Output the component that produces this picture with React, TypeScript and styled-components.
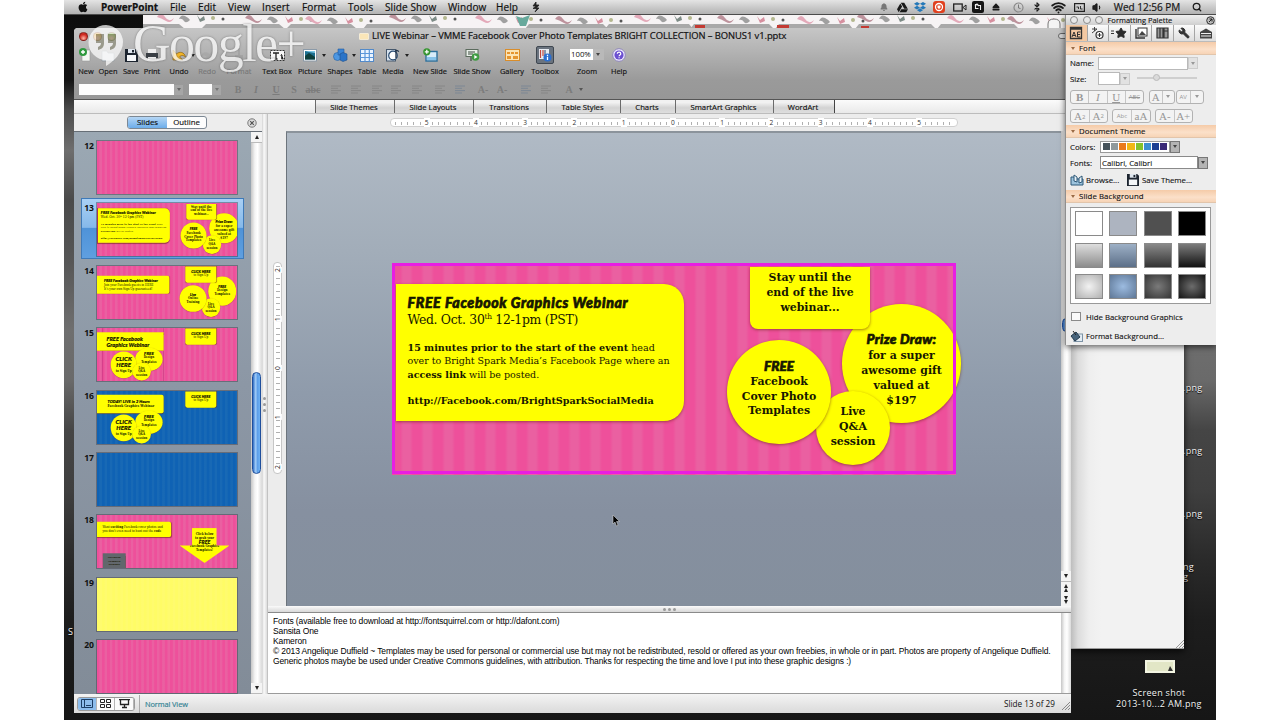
import React from 'react';
import styled, { createGlobalStyle, css } from 'styled-components';
import { Bluetooth, Wifi, Volume1, Search, Wrench, Star } from 'lucide-react';
import { FaApple, FaBell, FaDropbox, FaGoogleDrive, FaEject } from 'react-icons/fa';

const ui = `"Open Sans", "Noto Sans", sans-serif`;
const slab = `"DejaVu Serif", serif`;
const display = `Lato, "Open Sans", sans-serif`;

const Global = createGlobalStyle`
  *, *::before, *::after { box-sizing: border-box; }
  body { margin: 0; background: #fff; font-family: ${ui}; color: #111; overflow: hidden; }
  svg { display: block; flex: none; overflow: visible; }
`;

/* ---------- Desktop and menu bar ---------- */

const Desktop = styled.main`
  position: relative;
  width: 1152px;
  height: 720px;
  margin: 0 64px;
  overflow: hidden;
  background: linear-gradient(#0c0c0c 0, #141414 80px, #4c4c4c 110px, #6e6e6e 150px, #4a4a4a 200px, #565656 260px, #6f6f6f 330px, #6a6a6a 380px, #454545 430px, #3f3f3f 490px, #2a2a2a 560px, #1d1d1d 620px, #161616 720px);
`;

const MenuBar = styled.nav`
  position: relative;
  display: flex;
  align-items: center;
  height: 15px;
  padding-left: 13px;
  background: linear-gradient(#e4e4e4, #b2b2b2);
  border-bottom: 1px solid #4b4b4b;
  font-size: 10px;
  line-height: 14px;
  white-space: nowrap;
  -webkit-text-stroke: 0.2px #111;
`;

const MenuItem = styled.span<{ $w: number; $bold?: boolean; $ls?: number }>`
  flex: none;
  width: ${(p) => p.$w}px;
  font-weight: ${(p) => (p.$bold ? 700 : 400)};
  letter-spacing: ${(p) => p.$ls ?? 0.1}px;
`;

const TrayItem = styled.span<{ $w: number; $color?: string }>`
  flex: none;
  display: flex;
  justify-content: center;
  align-items: center;
  width: ${(p) => p.$w}px;
  color: ${(p) => p.$color ?? '#1a1a1a'};
`;

const Spacer = styled.span`
  flex: 1;
`;

/* ---------- Windows behind the document ---------- */

const BrowserWindow = styled.section`
  position: absolute;
  left: 79px;
  top: 15px;
  width: 928px;
  height: 14px;
  overflow: hidden;
  background: #f6f3f4;
`;

const FinderWindow = styled.section`
  position: absolute;
  left: 1007px;
  top: 300px;
  width: 113px;
  height: 349px;
  display: flex;
  align-items: flex-end;
  justify-content: flex-end;
  background: linear-gradient(90deg, #bdbdbd 0, #dcdcdc 7px, #eeeeee 18px, #f2f2f2 30px);
  border-bottom: 1px solid #9a9a9a;
  box-shadow: 0 2px 7px rgba(0, 0, 0, 0.8);
`;

const DesktopLabel = styled.span<{ $x: number; $y: number }>`
  position: absolute;
  left: ${(p) => p.$x}px;
  top: ${(p) => p.$y}px;
  color: #f4f4f4;
  font-size: 9px;
  line-height: 11px;
  letter-spacing: 0.3px;
  text-align: center;
  white-space: nowrap;
  text-shadow: 0 1px 1px #000;
`;

const FileIcon = styled.span`
  position: absolute;
  left: 1081px;
  top: 660px;
  display: flex;
  align-items: flex-end;
  justify-content: flex-end;
  width: 30px;
  height: 13px;
  background: #e2e6c6;
  border: 2px solid #f3f5e2;
  color: #333;
`;

const Pointer = styled.svg`
  position: absolute;
  left: 548px;
  top: 515px;
`;

/* ---------- PowerPoint window ---------- */

const AppWindow = styled.section`
  position: absolute;
  left: 10px;
  top: 28px;
  width: 997px;
  height: 685px;
  display: flex;
  flex-direction: column;
  background: #ececec;
  border-radius: 4px 4px 0 0;
  overflow: hidden;
`;

const Chrome = styled.header`
  height: 72px;
  background: linear-gradient(#c6c6c6, #b4b4b4 22px, #9a9a9a 52px, #979797);
  border-bottom: 1px solid #555;
`;

const TitleBar = styled.div`
  position: relative;
  display: flex;
  align-items: center;
  height: 16px;
  padding: 0 3px 0 5px;
`;

const WindowDot = styled.span<{ $c: string }>`
  width: 9px;
  height: 9px;
  margin-right: 5px;
  border-radius: 50%;
  border: 1px solid rgba(60, 10, 10, 0.5);
  background: radial-gradient(circle at 50% 75%, #ffb3a4, ${(p) => p.$c} 60%);
`;

const Title = styled.h1`
  display: flex;
  align-items: center;
  gap: 3px;
  margin: 0 0 0 238px;
  font-size: 9.4px;
  font-weight: 400;
  line-height: 14px;
  white-space: nowrap;
  letter-spacing: -0.06px;
  -webkit-text-stroke: 0.2px #111;
`;

const TitleIcon = styled.i`
  width: 10px;
  height: 7px;
  border-radius: 1px;
  background: #fae6b8;
  border: 1px solid #f5ecd6;
`;

const TitlePill = styled.i`
  flex: none;
  width: 14px;
  height: 6px;
  margin: 0 -4px 0 auto;
  border: 1px solid #666;
  border-radius: 4px;
  background: #d6d6d6;
`;

const Toolbar = styled.div`
  display: flex;
  height: 36px;
`;

const Tool = styled.div<{ $w: number; $ml?: number; $faded?: boolean }>`
  flex: none;
  display: flex;
  flex-direction: column;
  align-items: center;
  width: ${(p) => p.$w}px;
  margin-left: ${(p) => p.$ml ?? 0}px;
  padding-top: 2px;
  opacity: ${(p) => (p.$faded ? 0.3 : 1)};
`;

const ToolIcon = styled.span<{ $active?: boolean }>`
  flex: none;
  display: flex;
  align-items: center;
  justify-content: center;
  gap: 3px;
  width: 18px;
  height: 18px;
  border-radius: 2px;
  ${(p) =>
    p.$active &&
    css`
      background: #6a737e;
      border: 1px solid #3f4750;
    `}
`;

const ToolLabel = styled.span`
  margin-top: 2px;
  font-size: 7.4px;
  line-height: 10px;
  white-space: nowrap;
  -webkit-text-stroke: 0.15px #111;
`;

const Caret = styled.i<{ $c?: string }>`
  flex: none;
  border: 2px solid transparent;
  border-top: 3px solid ${(p) => p.$c ?? '#222'};
  border-bottom: 0;
`;

const ToolCaret = styled(Caret)`
  position: absolute;
  margin-left: 27px;
`;

const ZoomField = styled.span`
  display: flex;
  align-items: center;
  width: 34px;
  height: 11px;
  margin: 3px 0 4px;
  background: linear-gradient(90deg, #fff 23px, #b9b9b9 23px);
  font-size: 7.8px;
  line-height: 11px;
  padding-left: 1px;
  gap: 5px;
`;

const FormatBar = styled.div`
  display: flex;
  align-items: center;
  height: 19px;
  padding-left: 5px;
  color: #7c7c7c;
  font: 700 10px "Liberation Serif", serif;
`;

const Combo = styled.span<{ $w: number }>`
  flex: none;
  width: ${(p) => p.$w}px;
  height: 11px;
  background: #fdfdfd;
`;

const ComboArrow = styled.span<{ $w: number }>`
  flex: none;
  display: flex;
  align-items: center;
  justify-content: center;
  width: ${(p) => p.$w}px;
  height: 10px;
  background: #a6a6a6;
`;

const FormatCell = styled.span<{ $w: number; $italic?: boolean; $deco?: string }>`
  flex: none;
  display: flex;
  justify-content: center;
  width: ${(p) => p.$w}px;
  font-style: ${(p) => (p.$italic ? 'italic' : 'normal')};
  text-decoration: ${(p) => p.$deco ?? 'none'};
`;

const GalleryTabs = styled.div`
  display: flex;
  flex: none;
  height: 14px;
  padding-left: 241px;
  background: linear-gradient(#fbfbfb, #e9e9e9);
  border-bottom: 1px solid #bcbcbc;
`;

const GalleryTab = styled.span<{ $w: number }>`
  display: flex;
  justify-content: center;
  width: ${(p) => p.$w}px;
  padding-right: 2px;
  border-left: 1px solid #6b6b6b;
  background: linear-gradient(#f1f1f1 20%, #d2d2d2 60%, #dedede);
  font-size: 7.7px;
  line-height: 14px;
  white-space: nowrap;
  -webkit-text-stroke: 0.15px #111;
  &:last-child {
    border-right: 1px solid #444;
  }
`;

const Body = styled.div`
  display: flex;
  height: 580px;
`;

/* ---------- Slide list ---------- */

const SidePanel = styled.aside`
  display: flex;
  flex-direction: column;
  width: 188px;
`;

const PanelTabs = styled.div`
  display: flex;
  align-items: center;
  height: 17px;
  padding: 0 5px 0 53px;
  background: #ededed;
`;

const Segment = styled.div`
  display: flex;
  width: 80px;
  height: 13px;
  border: 1px solid #7c8894;
  border-radius: 3px;
  overflow: hidden;
  background: #fdfdfd;
  font-size: 7.8px;
  line-height: 11px;
  text-align: center;
`;

const SegmentItem = styled.span<{ $on?: boolean }>`
  flex: 1;
  background: ${(p) => (p.$on ? 'linear-gradient(#b5d6f5, #6cadea)' : 'none')};
  -webkit-text-stroke: 0.15px #111;
`;

const ListArea = styled.div`
  display: flex;
  flex: 1;
  min-height: 0;
  border-top: 1px solid #666e76;
`;

const SlideList = styled.ol`
  width: 177px;
  height: 562px;
  margin: 0;
  padding: 4px 7px 0;
  list-style: none;
  overflow: hidden;
  background: linear-gradient(#9ba8b3, #8c97a5 45%, #828c98);
`;

const SlideRow = styled.li<{ $on?: boolean }>`
  display: flex;
  align-items: flex-start;
  width: 163px;
  height: 61px;
  margin-bottom: 1.4px;
  padding: 4px 0 0;
  border: 1px solid ${(p) => (p.$on ? '#3f7ab8' : 'transparent')};
  background: ${(p) => (p.$on ? 'linear-gradient(#a9d0f5 0, #86b9ea 48%, #4f93d8 50%, #5f9fe0 100%)' : 'none')};
`;

const SlideNumber = styled.span`
  width: 12px;
  margin-right: 3px;
  font-size: 8.6px;
  font-weight: 700;
  line-height: 11px;
  text-align: right;
`;

const Thumb = styled.span`
  display: block;
  width: 140px;
  height: 53px;
  overflow: hidden;
  outline: 1px solid rgba(60, 60, 70, 0.45);
`;

const ThumbScale = styled.span`
  display: block;
  width: 564px;
  height: 212px;
  transform: scale(0.2495, 0.252);
  transform-origin: 0 0;
`;

const ScrollTrack = styled.div<{ $w: number }>`
  display: flex;
  flex-direction: column;
  align-items: center;
  width: ${(p) => p.$w}px;
  background: linear-gradient(90deg, #c6c6c6, #f4f4f4 35%, #fff 60%, #dadada);
`;

const ScrollThumb = styled.i<{ $top: number; $h: number }>`
  flex: none;
  width: 9px;
  height: ${(p) => p.$h}px;
  margin-top: ${(p) => p.$top}px;
  border: 1px solid #1f4f9c;
  border-radius: 5px;
  background: linear-gradient(90deg, #2f6cc4, #a8d2fa 40%, #5c9de8 60%, #6db2f4);
`;

const ScrollArrow = styled.span<{ $up?: boolean; $push?: boolean; $double?: boolean }>`
  display: flex;
  flex-direction: column;
  align-items: center;
  justify-content: center;
  width: 100%;
  height: ${(p) => (p.$double ? 12 : 11)}px;
  margin-top: ${(p) => (p.$push ? 'auto' : 0)};
  background: #f4f4f4;
  border-bottom: 1px solid ${(p) => (p.$double ? 'transparent' : '#bbb')};
  &::after,
  &::before {
    content: '';
    border: 2.5px solid transparent;
    ${(p) => (p.$up ? 'border-bottom: 4px solid #222; border-top: 0;' : 'border-top: 4px solid #222; border-bottom: 0;')}
  }
  &::before {
    display: ${(p) => (p.$double ? 'block' : 'none')};
  }
`;

const Divider = styled.div`
  display: flex;
  flex-direction: column;
  align-items: center;
  justify-content: center;
  gap: 3px;
  width: 6px;
  background: linear-gradient(90deg, #d2d2d2, #fafafa 40%, #dcdcdc);
  border-right: 1px solid #c2c2c2;
`;

const Grip = styled.i`
  width: 3px;
  height: 3px;
  border-radius: 50%;
  background: #9a9a9a;
`;

/* ---------- Editing area ---------- */

const Editor = styled.div`
  display: flex;
  flex-direction: column;
  width: 803px;
`;

const RulerRow = styled.div`
  flex: none;
  height: 17px;
  padding: 4px 0 0 122px;
  background: #ececec;
`;

const ticks = (dir: string) =>
  `repeating-linear-gradient(${dir}, #b0b0b0 0 1px, transparent 1px 6.16px)`;

const HRuler = styled.div`
  display: flex;
  width: 568px;
  height: 9px;
  padding-left: 11px;
  border-radius: 4px;
  border: 1px solid #d0d0d0;
  background: ${ticks('90deg')} 4px 3px / 558px 3px no-repeat, #fff;
`;

const HRulerMark = styled.span`
  width: 49.25px;
  font-size: 6.6px;
  line-height: 8px;
  text-align: center;
  color: #333;
  span { background: #fff; padding: 0 1px; }
`;

const WorkRow = styled.div`
  display: flex;
  flex: none;
  height: 475px;
`;

const VRulerColumn = styled.div`
  width: 18px;
  padding: 131px 0 0 5px;
  background: #ececec;
`;

const VRuler = styled.div`
  display: flex;
  flex-direction: column;
  width: 9px;
  height: 212px;
  border-radius: 4px;
  border: 1px solid #c6c6c6;
  background: ${ticks('180deg')} 2px 3px / 4px 206px no-repeat, #fff;
`;

const VRulerMark = styled.span`
  flex: none;
  display: flex;
  align-items: flex-end;
  justify-content: center;
  height: 49.3px;
  font-size: 6.6px;
  line-height: 8px;
  &:first-child { height: 30.5px; }
  span { margin-bottom: 20px; padding: 0 1px; background: #fff; transform: rotate(-90deg); }
`;

const Workspace = styled.div`
  width: 775px;
  border: 1px solid #6c747c;
  border-width: 2px 0 0 1px;
  border-top-color: #8b939b;
  padding: 130px 0 0 105px;
  background: linear-gradient(#b0bac5, #a2adb9 25%, #8f9bab 55%, #8690a0 80%, #848f9d);
`;

const SlideFrame = styled.div`
  position: relative;
  width: 564px;
  height: 211px;
  &::after {
    content: '';
    position: absolute;
    inset: 0;
    border: 3px solid #e81ee2;
  }
`;

const Splitter = styled.div`
  flex: none;
  display: flex;
  align-items: center;
  justify-content: center;
  gap: 2px;
  height: 7px;
  background: linear-gradient(#fafafa, #d8d8d8);
  border-bottom: 1px solid #8a8a8a;
`;

const NotesRow = styled.div`
  display: flex;
  flex: 1;
  min-height: 0;
  border-bottom: 1px solid #9b9b9b;
`;

const Notes = styled.div`
  width: 793px;
  padding: 3px 0 0 5px;
  background: #fff;
  font: 8.5px/10px "Liberation Sans", Arial, sans-serif;
  letter-spacing: -0.13px;
  white-space: nowrap;
  color: #000;
  p { margin: 0; }
`;

const StatusBar = styled.footer`
  display: flex;
  align-items: center;
  flex: 1;
  padding: 0 0 0 3px;
  background: linear-gradient(#f4f4f4, #dadada);
  font-size: 7.4px;
`;

const ViewButtons = styled.div`
  display: flex;
  width: 58px;
  height: 14px;
  border: 1px solid #9a9a9a;
  border-radius: 3px;
  overflow: hidden;
  background: #fafafa;
`;

const ViewButton = styled.span<{ $on?: boolean }>`
  flex: 1;
  display: flex;
  align-items: center;
  justify-content: center;
  background: ${(p) => (p.$on ? '#8dbdec' : 'none')};
  border-right: 1px solid #b5b5b5;
`;

const ViewName = styled.span`
  margin-left: 4px;
  padding-left: 5px;
  border-left: 1px solid #aaa;
  line-height: 18px;
  letter-spacing: -0.1px;
  color: #2f7f92;
  -webkit-text-stroke: 0.15px #2f7f92;
`;

const SlideCount = styled.span`
  margin-left: auto;
  margin-right: 2px;
  font-size: 8.2px;
`;

/* ---------- Slide artwork ---------- */

const stripes: Record<string, [string, string]> = {
  pink: ['#ee509b', '#ea60a1'],
  blue: ['#0f62b4', '#1869b5'],
  yellow: ['#fffc66', '#fffb6e'],
};

const Canvas = styled.span<{ $tone: string }>`
  position: relative;
  display: block;
  width: 564px;
  height: 212px;
  background: repeating-linear-gradient(
    90deg,
    ${(p) => stripes[p.$tone][0]} 0 8px,
    ${(p) => stripes[p.$tone][1]} 11px 18px,
    ${(p) => stripes[p.$tone][0]} 21px
  );
`;

const Shape = styled.span<{ $x: number; $y: number; $w: number; $h: number; $r?: string; $s?: number; $lh?: number; $left?: number; $bg?: string; $pt?: number }>`
  position: absolute;
  left: ${(p) => p.$x}px;
  top: ${(p) => p.$y}px;
  width: ${(p) => p.$w}px;
  height: ${(p) => p.$h}px;
  display: flex;
  flex-direction: column;
  justify-content: ${(p) => (p.$pt === undefined ? 'center' : 'flex-start')};
  padding-top: ${(p) => p.$pt ?? 0}px;
  align-items: ${(p) => (p.$left === undefined ? 'center' : 'flex-start')};
  padding-left: ${(p) => p.$left ?? 0}px;
  border-radius: ${(p) => p.$r ?? '50%'};
  background: ${(p) => p.$bg ?? '#ffff00'};
  box-shadow: 0 1px 3px rgba(110, 40, 20, 0.6);
  color: #171700;
  font-family: ${slab};
  font-weight: 700;
  font-size: ${(p) => p.$s ?? 10.9}px;
  line-height: ${(p) => p.$lh ?? 14.8}px;
  white-space: nowrap;
`;

const Heading = styled.span<{ $s?: number; $ls?: number }>`
  font-family: ${display};
  font-style: italic;
  font-weight: 900;
  font-size: ${(p) => p.$s ?? 13.6}px;
  letter-spacing: ${(p) => p.$ls ?? 0.3}px;
  -webkit-text-stroke: 0.7px #171700;
`;

const Line = styled.span<{ $s?: number; $mt?: number; $light?: boolean; $ls?: number }>`
  font-size: ${(p) => (p.$s ? `${p.$s}px` : 'inherit')};
  margin-top: ${(p) => p.$mt ?? 0}px;
  font-weight: ${(p) => (p.$light ? 400 : 700)};
  letter-spacing: ${(p) => p.$ls ?? 0}px;
  sup { font-size: 0.6em; line-height: 0; }
`;

const Arrow = styled(Shape)`
  clip-path: polygon(25% 0, 74% 0, 74% 50%, 100% 50%, 50% 100%, 0 50%, 25% 50%);
`;

const WebinarSlide = () => (
  <Canvas $tone="pink">
    <Shape $x={450} $y={41} $w={119} $h={119} $lh={14.9} $pt={28}>
      <Heading>Prize Draw:</Heading>
      <Line $mt={2}>for a super</Line>
      <Line>awesome gift</Line>
      <Line>valued at</Line>
      <Line>$197</Line>
    </Shape>
    <Shape $x={4} $y={21} $w={288} $h={137} $r="0 20px 20px 0" $left={11.5} $lh={13.4} $pt={12}>
      <Heading $s={14.2} $ls={0.62}>FREE Facebook Graphics Webinar</Heading>
      <Line $s={12.4} $mt={4} $light $ls={-0.3}>
        Wed. Oct. 30<sup>th</sup> 12-1pm (PST)
      </Line>
      <Line $s={9.55} $mt={14} $light><b>15 minutes prior to the start of the event</b> head</Line>
      <Line $s={9.5} $light $ls={-0.02}>over to Bright Spark Media’s Facebook Page where an</Line>
      <Line $s={9.5} $light><b>access link</b> will be posted.</Line>
      <Line $s={9.65} $mt={13}>http://Facebook.com/BrightSparkSocialMedia</Line>
    </Shape>
    <Shape $x={358} $y={4} $w={120} $h={62} $r="0 0 8px 8px" $pt={4}>
      <Line>Stay until the</Line>
      <Line>end of the live</Line>
      <Line>webinar...</Line>
    </Shape>
    <Shape $x={424} $y={128} $w={74} $h={74} $pt={14}>
      <Line>Live</Line>
      <Line>Q&amp;A</Line>
      <Line>session</Line>
    </Shape>
    <Shape $x={335} $y={77} $w={104} $h={104} $pt={19}>
      <Heading $ls={0}>FREE</Heading>
      <Line $mt={1}>Facebook</Line>
      <Line>Cover Photo</Line>
      <Line>Templates</Line>
    </Shape>
  </Canvas>
);

const SignUpBox = () => (
  <Shape $x={354} $y={2} $w={124} $h={64} $r="0 0 8px 8px" $pt={12}>
    <Heading $s={14}>CLICK HERE</Heading>
    <Line $light>to Sign Up</Line>
  </Shape>
);

const InviteSlide = () => (
  <Canvas $tone="pink">
    <Shape $x={0} $y={39} $w={290} $h={71} $r="0 8px 8px 0" $left={28} $lh={17}>
      <Heading $s={14.5}>FREE Facebook Graphics Webinar</Heading>
      <Line $s={11} $light>Join your Facebook guests in HERE</Line>
      <Line $s={11} $light>It’s your own Sign Up guaranteed!</Line>
    </Shape>
    <Shape $x={446} $y={42} $w={112} $h={116} $pt={32}>
      <Heading>FREE</Heading>
      <Line>Design</Line>
      <Line>Templates</Line>
    </Shape>
    <SignUpBox />
    <Shape $x={420} $y={128} $w={74} $h={74}>
      <Line>Live</Line>
      <Line>Q&amp;A</Line>
      <Line>session</Line>
    </Shape>
    <Shape $x={331} $y={76} $w={108} $h={106}>
      <Heading>Live</Heading>
      <Line>Online</Line>
      <Line>Training</Line>
    </Shape>
  </Canvas>
);

const PromoSlide = ({ tone, children }: { tone: string; children: React.ReactNode }) => (
  <Canvas $tone={tone}>
    {children}
    <Shape $x={153} $y={78} $w={110} $h={92} $lh={17} $pt={14}>
      <Heading $s={17}>FREE</Heading>
      <Line>Design</Line>
      <Line>Templates</Line>
    </Shape>
    <Shape $x={55} $y={93} $w={104} $h={106} $lh={24}>
      <Heading $s={24}>CLICK</Heading>
      <Heading $s={24}>HERE</Heading>
      <Line>to Sign Up</Line>
    </Shape>
    <Shape $x={142} $y={138} $w={74} $h={70}>
      <Line>Live</Line>
      <Line>Q&amp;A</Line>
      <Line>session</Line>
    </Shape>
    <SignUpBox />
  </Canvas>
);

const slides: { n: number; on?: boolean; art: React.ReactNode }[] = [
  { n: 12, art: <Canvas $tone="pink" /> },
  { n: 13, on: true, art: <WebinarSlide /> },
  { n: 14, art: <InviteSlide /> },
  {
    n: 15,
    art: (
      <PromoSlide tone="pink">
        <Shape $x={20} $y={0} $w={2} $h={212} $r="0" $bg="#e2389f" />
        <Shape $x={266} $y={0} $w={2} $h={212} $r="0" $bg="#e2389f" />
        <Shape $x={0} $y={17} $w={267} $h={73} $r="0" $left={38} $lh={25}>
          <Heading $s={22}>FREE Facebook</Heading>
          <Heading $s={22}>Graphics Webinar</Heading>
        </Shape>
      </PromoSlide>
    ),
  },
  {
    n: 16,
    art: (
      <PromoSlide tone="blue">
        <Shape $x={0} $y={15} $w={267} $h={73} $r="0 8px 8px 0" $left={42} $lh={18}>
          <Heading $s={16}>TODAY! LIVE in 2 Hours</Heading>
          <Line $s={12}>Facebook Graphics Webinar</Line>
        </Shape>
      </PromoSlide>
    ),
  },
  { n: 17, art: <Canvas $tone="blue" /> },
  {
    n: 18,
    art: (
      <Canvas $tone="pink">
        <Shape $x={0} $y={27} $w={297} $h={60} $r="0 8px 8px 0" $left={22} $s={11.2} $lh={16}>
          <Line $light>Want <b>exciting</b> Facebook cover photos and</Line>
          <Line $light>you don’t even need to hunt out the <b>code</b></Line>
        </Shape>
        <Shape $x={23} $y={152} $w={92} $h={60} $r="0" $bg="#62676c" $s={10} $lh={14}>
          <Line>Facebook</Line>
          <Line>Graphics</Line>
          <Line>Webinar</Line>
        </Shape>
        <Arrow $x={331} $y={52} $w={200} $h={138} $r="0" $s={11} $lh={16} $pt={16}>
          <Line>Click below</Line>
          <Line>to grab your</Line>
          <Heading $s={20}>FREE</Heading>
          <Line>Facebook Graphics</Line>
          <Line>Templates!</Line>
        </Arrow>
      </Canvas>
    ),
  },
  { n: 19, art: <Canvas $tone="yellow" /> },
  { n: 20, art: <Canvas $tone="pink" /> },
];

/* ---------- Formatting palette ---------- */

const Palette = styled.section`
  position: absolute;
  left: 1001px;
  top: 15px;
  width: 151px;
  height: 330px;
  display: flex;
  flex-direction: column;
  background: #ededed;
  border-left: 1px solid #8f8f8f;
  box-shadow: 0 2px 6px rgba(0, 0, 0, 0.6);
  font-size: 7.8px;
  white-space: nowrap;
  -webkit-text-stroke: 0.12px #111;
`;

const PaletteTitle = styled.div`
  display: flex;
  align-items: center;
  height: 10px;
  padding: 0 1px 0 4px;
  gap: 4.5px;
  background: linear-gradient(#f0f0f0, #cfcfcf);
  font-size: 7.5px;
  line-height: 10px;
`;

const Ring = styled.i`
  width: 8px;
  height: 8px;
  border: 1px solid #8a8a8a;
  border-radius: 50%;
  background: #e8e8e8;
`;

const PaletteTabs = styled.div`
  display: flex;
  height: 17px;
  border-bottom: 1px solid #bbb;
`;

const PaletteTab = styled.span<{ $on?: boolean }>`
  flex: 1;
  display: flex;
  align-items: center;
  justify-content: center;
  border-right: 1px solid #a5a5a5;
  background: ${(p) => (p.$on ? '#f3c8a2' : 'linear-gradient(#fbfbfb, #dedede)')};
  &:last-child { border-right: 0; }
`;

const SectionHead = styled.h2`
  display: flex;
  align-items: center;
  flex: none;
  gap: 4px;
  height: 13px;
  margin: 0;
  padding-left: 5px;
  background: linear-gradient(#f5cba8, #fbe0c9 60%, #f7d4b6);
  border-bottom: 1px solid #e2c5ab;
  font-size: 7.8px;
  font-weight: 400;
  letter-spacing: 0.1px;
`;

const SectionBody = styled.div<{ $h: number; $pt?: number }>`
  flex: none;
  height: ${(p) => p.$h}px;
  padding: ${(p) => p.$pt ?? 0}px 0 0 4px;
`;

const Row = styled.div<{ $h: number }>`
  display: flex;
  align-items: center;
  height: ${(p) => p.$h}px;
`;

const RowLabel = styled.span<{ $w: number }>`
  width: ${(p) => p.$w}px;
`;

const Field = styled.span<{ $w: number; $dark?: boolean }>`
  width: ${(p) => p.$w}px;
  height: 13px;
  padding-left: 1px;
  line-height: 12px;
  border: 1px solid ${(p) => (p.$dark ? '#8a8a8a' : '#b9b9b9')};
  background: #fff;
`;

const DropButton = styled.span<{ $dark?: boolean }>`
  display: flex;
  align-items: center;
  justify-content: center;
  width: 10px;
  height: 12px;
  border: 1px solid ${(p) => (p.$dark ? '#777' : '#ccc')};
  background: ${(p) => (p.$dark ? '#b4b4b4' : '#e2e2e2')};
`;

const Slider = styled.span`
  display: flex;
  width: 60px;
  height: 2px;
  margin: 0 0 2px 7px;
  padding-left: 16px;
  align-items: center;
  background: #cfcfcf;
  i { width: 7px; height: 7px; border-radius: 50%; background: #dadada; border: 1px solid #bbb; flex: none; }
`;

const ButtonGroup = styled.span<{ $w: number; $mr?: number }>`
  display: flex;
  width: ${(p) => p.$w}px;
  height: 14px;
  margin-right: ${(p) => p.$mr ?? 0}px;
  border: 1px solid #b2b2b2;
  border-radius: 3px;
  background: #f3f3f3;
  color: #979797;
  font: 11px/12px "Liberation Serif", serif;
  -webkit-text-stroke: 0;
  span { flex: 1; display: flex; justify-content: center; align-items: center; border-right: 1px solid #c6c6c6; }
  span:last-child { border-right: 0; }
  small { font: 6px/12px ${ui}; }
`;

const Colors = styled.span`
  display: flex;
  gap: 1px;
  width: 70px;
  height: 12px;
  padding: 1.5px 2px;
  border: 1px solid #999;
  background: #fff;
`;

const Chip = styled.i<{ $c: string }>`
  flex: 1;
  background: ${(p) => p.$c};
`;

const SwatchGrid = styled.div`
  display: grid;
  grid-template-columns: repeat(4, 28px);
  grid-auto-rows: 25px;
  gap: 6.7px 6.3px;
  width: 141px;
  height: 97px;
  padding: 3px 0 0 4px;
  border: 1px solid #999;
  background: #fff;
`;

const Swatch = styled.i<{ $bg: string }>`
  border: 1px solid #8a8a8a;
  background: ${(p) => p.$bg};
`;

const Check = styled.i`
  width: 10px;
  height: 9px;
  margin: 0 5px 0 1px;
  border: 1px solid #8a8a8a;
  background: #fafafa;
`;

const LinkText = styled.span<{ $w?: number; $ml?: number }>`
  width: ${(p) => (p.$w ? `${p.$w}px` : 'auto')};
  margin-left: ${(p) => p.$ml ?? 2}px;
`;

const swatches = [
  '#fff', '#adb4c0', '#505050', '#000',
  'linear-gradient(#dedede, #8c8c8c)', 'linear-gradient(#9db0c6, #5c6f88)', 'linear-gradient(#8a8a8a, #333)', 'linear-gradient(#7c7c7c, #111)',
  'radial-gradient(#f2f2f2, #b0b0b0)', 'radial-gradient(#9cbbe0, #5e7796)', 'radial-gradient(#7a7a7a, #363636)', 'radial-gradient(#6c6c6c, #141414)',
];

const themeColors = ['#46525a', '#8f999c', '#ea7a1c', '#f1b815', '#84c22c', '#3c8fd2', '#1b3f93', '#3b2a78'];

/* ---------- Watermark ---------- */

const Watermark = styled.div`
  position: absolute;
  left: 24px;
  top: 22px;
  display: flex;
  align-items: flex-start;
  opacity: 0.72;
`;

const WatermarkText = styled.span`
  margin: -3px 0 0 9px;
  color: #fff;
  font: 52px/50px "Liberation Serif", serif;
  letter-spacing: -1.6px;
  text-shadow: 0 0 2px rgba(70, 70, 70, 0.9);
`;

/* ---------- Drawn icons ---------- */

const DiskIcon = ({ s = 13 }: { s?: number }) => (
  <svg width={s} height={s} viewBox="0 0 13 13">
    <path d="M0 0h11l2 2v11H0z" fill="#1d2530" />
    <rect x="3" y="0" width="7" height="4" fill="#dfe6ee" />
    <rect x="2" y="6" width="9" height="6" fill="#f4f6f8" />
    <rect x="7" y="1" width="2" height="2.4" fill="#1d2530" />
  </svg>
);

const toolIcons: Record<string, React.ReactNode> = {
  New: (
    <svg width="14" height="14" viewBox="0 0 14 14">
      <path d="M3 2h8v11H3z" fill="#f4f7f4" stroke="#999" strokeWidth=".6" />
      <circle cx="4" cy="4" r="4" fill="#2f9a3f" />
      <path d="M4 2v4M2 4h4" stroke="#fff" strokeWidth="1.4" />
    </svg>
  ),
  Open: (
    <svg width="14" height="14" viewBox="0 0 14 14">
      <path d="M1 3h5l1 2h6v8H1z" fill="#d8dde2" stroke="#8c949c" strokeWidth=".6" />
    </svg>
  ),
  Save: <DiskIcon />,
  Print: (
    <svg width="14" height="14" viewBox="0 0 14 14">
      <path d="M3 1h8v5H3z" fill="#eee" />
      <rect x="1" y="5" width="12" height="5" fill="#3a3f45" />
      <rect x="3" y="9" width="8" height="3" fill="#f0f0f0" />
    </svg>
  ),
  Undo: (
    <svg width="16" height="14" viewBox="0 0 16 14">
      <path d="M2 2v10h10l-3.500-3c1.500-2 4-2 6 0-1-5-6-6-9-3z" fill="#f0b428" stroke="#8a6214" strokeWidth=".7" />
    </svg>
  ),
  Redo: (
    <svg width="16" height="14" viewBox="0 0 16 14">
      <path d="M14 2v10H4l3.500-3C6 7 3.500 7 1.500 9c1-5 6-6 9-3z" fill="#999" />
    </svg>
  ),
  Format: (
    <svg width="12" height="14" viewBox="0 0 12 14">
      <path d="M5 0h2v7H5zM2 7h8v6H2z" fill="#888" />
    </svg>
  ),
  'Text Box': (
    <svg width="15" height="13" viewBox="0 0 15 13">
      <rect x=".5" y="1.500" width="14" height="10" fill="#f6f6f6" stroke="#333" strokeDasharray="2 1" />
      <path d="M3 4h6M6 4v6M4.500 10h3" stroke="#222" strokeWidth="1.300" />
      <path d="M10.500 6.500h2M11.500 5v5h2" stroke="#444" />
    </svg>
  ),
  Picture: (
    <svg width="14" height="13" viewBox="0 0 14 13">
      <rect x=".5" y=".5" width="13" height="11.500" fill="#fff" stroke="#8b9aa8" />
      <rect x="2" y="2" width="10" height="8.500" fill="#1c6f8f" />
      <path d="M2 7l4-3 6 4v2.500H2z" fill="#0d3f3c" />
      <path d="M2 2h10v2L6 3z" fill="#7cc6e4" />
    </svg>
  ),
  Shapes: (
    <svg width="15" height="14" viewBox="0 0 15 14">
      <circle cx="4.500" cy="8.500" r="4" fill="#4d97e2" stroke="#235c9e" strokeWidth=".6" />
      <path d="M5 1h6v6H5z" fill="#3a84d6" stroke="#235c9e" strokeWidth=".6" />
      <path d="M7 6l3-1.500L14 6v6l-4 1.500L7 12z" fill="#2b74c8" stroke="#1d4f8c" strokeWidth=".6" />
    </svg>
  ),
  Table: (
    <svg width="14" height="13" viewBox="0 0 14 13">
      <rect x=".5" y=".5" width="13" height="12" fill="#eaf4ff" stroke="#5289c8" />
      <path d="M.5 4.500h13M.5 8.500h13M5 .5v12M9.300.5v12" stroke="#5b97da" strokeWidth="1.200" />
    </svg>
  ),
  Media: (
    <svg width="14" height="13" viewBox="0 0 14 13">
      <rect x=".5" y=".5" width="9" height="11.500" fill="#d6e2ee" stroke="#46586c" />
      <circle cx="7" cy="6.500" r="4.300" fill="#fff" stroke="#2c4d72" strokeWidth="1.200" />
      <path d="M10 1v8M10 1l3 1.500" stroke="#1f3147" strokeWidth="1.300" />
    </svg>
  ),
  'New Slide': (
    <svg width="15" height="14" viewBox="0 0 15 14">
      <rect x="3" y="3.500" width="11" height="9.500" fill="#d8ecfa" stroke="#2c6f9c" strokeWidth="1.400" />
      <path d="M4 9h9v3H4z" fill="#86c3ea" />
      <circle cx="3.800" cy="3.800" r="3.600" fill="#35952f" />
      <path d="M3.800 1.800v4M1.800 3.800h4" stroke="#fff" strokeWidth="1.300" />
    </svg>
  ),
  'Slide Show': (
    <svg width="15" height="14" viewBox="0 0 15 14">
      <rect x="1" y="1.500" width="12" height="7" fill="#e9efe9" stroke="#5b6b5d" />
      <path d="M3 4h7M3 6h5M6 9v4" stroke="#3c4b3e" strokeWidth="1.200" />
      <circle cx="10.500" cy="9" r="3.800" fill="#3f9c43" />
      <path d="M9.300 7v4l3.200-2z" fill="#fff" />
    </svg>
  ),
  Gallery: (
    <svg width="15" height="12" viewBox="0 0 15 12">
      <rect x=".5" y=".5" width="14" height="11" fill="#fbe3b4" stroke="#d98d2b" />
      <path d="M2 3h3v2H2zM6 3h3v2H6zM10 3h3v2h-3zM2 7h4v3H2zM8 7h5v3H8z" fill="#e5952f" />
    </svg>
  ),
  Toolbox: (
    <svg width="14" height="14" viewBox="0 0 14 14">
      <rect x="1" y="1" width="10" height="10" fill="#e8edf3" />
      <path d="M2.500 2v8M5 2v6" stroke="#c2473d" strokeWidth="1.200" />
      <path d="M7 2v6" stroke="#475f7f" strokeWidth="1.200" />
      <circle cx="9.500" cy="9.500" r="4" fill="#2b6fd0" />
      <path d="M9.500 8.700V12M9.500 6.800v1.100" stroke="#fff" strokeWidth="1.300" />
    </svg>
  ),
  Help: (
    <svg width="14" height="14" viewBox="0 0 14 14">
      <circle cx="7" cy="7" r="6.300" fill="#efeaff" stroke="#8d84bb" />
      <circle cx="7" cy="7" r="4.600" fill="#6b4fd0" />
      <path d="M5.300 5.800c0-2.300 3.500-2.300 3.500 0 0 1.200-1.700 1.200-1.700 2.400M7.100 9.300v1" stroke="#fff" strokeWidth="1.200" fill="none" />
    </svg>
  ),
};

const tools: { name: string; w: number; faded?: boolean; caret?: boolean; active?: boolean }[] = [
  { name: 'New', w: 24 },
  { name: 'Open', w: 20 },
  { name: 'Save', w: 26 },
  { name: 'Print', w: 16 },
  { name: 'Undo', w: 38, caret: true },
  { name: 'Redo', w: 18, faded: true },
  { name: 'Format', w: 46, faded: true },
  { name: 'Text Box', w: 30 },
  { name: 'Picture', w: 36, caret: true },
  { name: 'Shapes', w: 24, caret: true },
  { name: 'Table', w: 30 },
  { name: 'Media', w: 22, caret: true },
  { name: 'New Slide', w: 52 },
  { name: 'Slide Show', w: 32 },
  { name: 'Gallery', w: 48 },
  { name: 'Toolbox', w: 18, active: true },
];

const galleryTabs: [string, number][] = [
  ['Slide Themes', 79], ['Slide Layouts', 79], ['Transitions', 73], ['Table Styles', 74],
  ['Charts', 55], ['SmartArt Graphics', 98], ['WordArt', 62],
];

const menus: [string, number][] = [
  ['File', 28], ['Edit', 30], ['View', 34], ['Insert', 40], ['Format', 46],
  ['Tools', 37], ['Slide Show', 63], ['Window', 48], ['Help', 36],
];

const LinesIcon = ({ c = '#868686' }: { c?: string }) => (
  <svg width="10" height="9" viewBox="0 0 10 9">
    <path d="M0 1h10M0 3.300h7M0 5.600h10M0 8h7" stroke={c} />
  </svg>
);

const BrowserArt = () => (
  <svg width="928" height="14" viewBox="0 0 928 14">
    <g>
      {[0, 88, 148, 232, 318, 398, 477, 560, 640, 700, 790, 850].map((x, i) => (
        <g key={x} transform={`translate(${x + 14} ${i % 3})`}>
          <path d="M0 2q4-6 8 0t9 1q-3 6-8 3t-9-4z" fill={i % 2 ? '#bd929c' : '#e3a9b9'} />
          <path d="M22 4q2-5 6-3t5 4q-4 4-6 1t-5-2z" fill="#8b8b8b" opacity=".8" />
          <path d="M40 0l3 4 4-3 1 4-5 2z" fill={i % 3 ? '#d68f9f' : '#7d8b86'} />
          <circle cx="56" cy="3" r="2" fill="#b4b88e" />
          <circle cx="66" cy="4" r="1.500" fill="#555" />
        </g>
      ))}
    </g>
    <path d="M373 1l6 2 8-3-4 11h-6z" fill="#67a99c" />
    <path
      d="M-20 14l6-5H36l6 5zM58 14l5-5h73l6 5zM143 14l5-5H208l6 5zM220 14l4-5h70l4 5zM382 14l4-5h70l6 5zM383 14l5-5h72l5 5zM462 14l4-5h80l4 5zM547 14l4-5h75l5 5zM632 14l4-5h70l4 5zM712 14l4-5h72l5 5zM794 14l4-5h73l5 5z"
      fill="#a9a9a9"
    />
    <path d="M634 10h12v3h-12zM552 10h10v3h-10zM718 11h8v2h-8z" fill="#c33a33" />
    <path d="M905 14V9q0-5 6-5t6 5v5" fill="#f4f4f4" stroke="#777" />
  </svg>
);

export default function App() {
  return (
    <Desktop>
      <Global />

      <DesktopLabel $x={4} $y={626}>S</DesktopLabel>
      <DesktopLabel $x={1119} $y={382}>.png</DesktopLabel>
      <DesktopLabel $x={1119} $y={445}>.png</DesktopLabel>
      <DesktopLabel $x={1119} $y={508}>.png</DesktopLabel>
      <DesktopLabel $x={1119} $y={561}>ng</DesktopLabel>
      <DesktopLabel $x={1119} $y={571}>g</DesktopLabel>
      <FileIcon>
        <svg width="6" height="6" viewBox="0 0 6 6"><path d="M1 6l2-5 3 5z" fill="#333" /></svg>
      </FileIcon>
      <DesktopLabel $x={1052} $y={687}>
        Screen shot<br />2013-10...2 AM.png
      </DesktopLabel>

      <FinderWindow>
        <svg width="8" height="8" viewBox="0 0 8 8"><path d="M0 8l8-8M3 8l5-5M6 8l2-2" stroke="#999" /></svg>
      </FinderWindow>
      <BrowserWindow><BrowserArt /></BrowserWindow>

      <AppWindow>
        <Chrome>
          <TitleBar>
            <WindowDot $c="#cf2a22" />
            <WindowDot $c="#e5a52a" />
            <WindowDot $c="#7fb53a" />
            <Title><TitleIcon />LIVE Webinar – VMME Facebook Cover Photo Templates BRIGHT COLLECTION – BONUS1 v1.pptx</Title>
            <TitlePill />
          </TitleBar>
          <Toolbar>
            {tools.map((t) => (
              <Tool key={t.name} $w={t.w} $faded={t.faded}>
                <ToolIcon $active={t.active}>
                  {toolIcons[t.name]}
                  {t.caret && <ToolCaret />}
                </ToolIcon>
                <ToolLabel>{t.name}</ToolLabel>
              </Tool>
            ))}
            <Tool $w={50} $ml={8}>
              <ZoomField>100%<Caret $c="#444" /></ZoomField>
              <ToolLabel>Zoom</ToolLabel>
            </Tool>
            <Tool $w={14}>
              <ToolIcon>{toolIcons.Help}</ToolIcon>
              <ToolLabel>Help</ToolLabel>
            </Tool>
          </Toolbar>
          <FormatBar>
            <Combo $w={95} />
            <ComboArrow $w={9}><Caret $c="#666" /></ComboArrow>
            <FormatCell $w={6} />
            <Combo $w={23} />
            <ComboArrow $w={9}><Caret $c="#777" /></ComboArrow>
            <FormatCell $w={10} />
            <FormatCell $w={14}>B</FormatCell>
            <FormatCell $w={22} $italic>I</FormatCell>
            <FormatCell $w={18} $deco="underline">U</FormatCell>
            <FormatCell $w={18}>S</FormatCell>
            <FormatCell $w={20} $deco="line-through">abc</FormatCell>
            <FormatCell $w={26}><LinesIcon /></FormatCell>
            <FormatCell $w={14}><LinesIcon /></FormatCell>
            <FormatCell $w={28}><LinesIcon /></FormatCell>
            <FormatCell $w={10}><LinesIcon /></FormatCell>
            <FormatCell $w={32}><LinesIcon /></FormatCell>
            <FormatCell $w={14}><LinesIcon /></FormatCell>
            <FormatCell $w={26}><LinesIcon c="#7c8794" /></FormatCell>
            <FormatCell $w={20}>A-</FormatCell>
            <FormatCell $w={18}>A-</FormatCell>
            <FormatCell $w={30}><LinesIcon c="#7c8794" /></FormatCell>
            <FormatCell $w={10}><LinesIcon /></FormatCell>
            <FormatCell $w={8} />
            <FormatCell $w={20}>A</FormatCell>
            <Caret $c="#555" />
          </FormatBar>
        </Chrome>

        <GalleryTabs>
          {galleryTabs.map(([name, w]) => <GalleryTab key={name} $w={w}>{name}</GalleryTab>)}
        </GalleryTabs>

        <Body>
          <SidePanel>
            <PanelTabs>
              <Segment>
                <SegmentItem $on>Slides</SegmentItem>
                <SegmentItem>Outline</SegmentItem>
              </Segment>
              <Spacer />
              <svg width="10" height="10" viewBox="0 0 10 10">
                <circle cx="5" cy="5" r="4.200" fill="#ddd" stroke="#777" />
                <path d="M3.200 3.200l3.600 3.600M6.800 3.200L3.200 6.800" stroke="#555" strokeWidth="1.200" />
              </svg>
            </PanelTabs>
            <ListArea>
              <SlideList>
                {slides.map((s) => (
                  <SlideRow key={s.n} $on={s.on}>
                    <SlideNumber>{s.n}</SlideNumber>
                    <Thumb><ThumbScale>{s.art}</ThumbScale></Thumb>
                  </SlideRow>
                ))}
              </SlideList>
              <ScrollTrack $w={11}>
                <ScrollArrow $up />
                <ScrollThumb $top={229} $h={102} />
                <ScrollArrow $push />
              </ScrollTrack>
            </ListArea>
          </SidePanel>
          <Divider><Grip /><Grip /><Grip /></Divider>

          <Editor>
            <RulerRow>
              <HRuler>
                {[5, 4, 3, 2, 1, 0, 1, 2, 3, 4, 5].map((n, i) => (
                  <HRulerMark key={i}><span>{n}</span></HRulerMark>
                ))}
              </HRuler>
            </RulerRow>
            <WorkRow>
              <VRulerColumn>
                <VRuler>
                  {[2, 1, 0, 1, 2].map((n, i) => <VRulerMark key={i}><span>{n}</span></VRulerMark>)}
                </VRuler>
              </VRulerColumn>
              <Workspace>
                <SlideFrame><WebinarSlide /></SlideFrame>
              </Workspace>
              <ScrollTrack $w={10}>
                <ScrollThumb $top={187} $h={14} />
                <ScrollArrow $push />
                <ScrollArrow $up $double />
                <ScrollArrow $double />
                <ScrollTrack $w={10} />
              </ScrollTrack>
            </WorkRow>
            <Splitter><Grip /><Grip /><Grip /></Splitter>
            <NotesRow>
              <Notes>
                <p>Fonts (available free to download at http://fontsquirrel.com or http://dafont.com)</p>
                <p>Sansita One</p>
                <p>Kameron</p>
                <p>© 2013 Angelique Duffield ~ Templates may be used for personal or commercial use but may not be redistributed, resold or offered as your own freebies, in whole or in part. Photos are property of Angelique Duffield.</p>
                <p>Generic photos maybe be used under Creative Commons guidelines, with attribution. Thanks for respecting the time and love I put into these graphic designs :)</p>
              </Notes>
              <ScrollTrack $w={10} />
            </NotesRow>
          </Editor>
        </Body>

        <StatusBar>
          <ViewButtons>
            <ViewButton $on>
              <svg width="12" height="9" viewBox="0 0 12 9"><path d="M.5.5h11v8H.5zM3.500.5v8M5 6.500h5" fill="none" stroke="#1d3f66" /></svg>
            </ViewButton>
            <ViewButton>
              <svg width="11" height="9" viewBox="0 0 11 9"><path d="M.5.5h4v3h-4zM6.500.5h4v3h-4zM.5 5.500h4v3h-4zM6.500 5.500h4v3h-4z" fill="none" stroke="#222" /></svg>
            </ViewButton>
            <ViewButton>
              <svg width="11" height="9" viewBox="0 0 11 9"><path d="M0 .7h11M1.500 1v4.500h8V1M5.500 5.500v3M3 8.500h5" fill="none" stroke="#222" strokeWidth="1.300" /></svg>
            </ViewButton>
          </ViewButtons>
          <ViewName>Normal View</ViewName>
          <SlideCount>Slide 13 of 29</SlideCount>
          <svg width="14" height="8" viewBox="0 0 14 8"><path d="M5 10l8-8M8 10l5-5M11 10l2-2" stroke="#888" /></svg>
        </StatusBar>
      </AppWindow>

      <Palette>
        <PaletteTitle>
          <Ring /><Ring /><Ring />
          <LinkText $ml={0}>Formatting Palette</LinkText>
          <Spacer />
          <svg width="9" height="9" viewBox="0 0 9 9"><circle cx="4.500" cy="4.500" r="3.800" fill="#bbb" stroke="#333" /><path d="M3 6l3-3M3.500 3H6v2.500" stroke="#222" fill="none" /></svg>
        </PaletteTitle>
        <PaletteTabs>
          <PaletteTab $on>
            <svg width="12" height="12" viewBox="0 0 12 12"><path d="M.5.5h11v11H.5zM.5 2h11" fill="none" stroke="#333" strokeWidth="1.300" /><path d="M2 10l2-5 2 5M2.700 8.500h2.600M7.500 5v5M7.500 5h3M7.500 7.500h2.500M7.500 10h3" fill="none" stroke="#333" /></svg>
          </PaletteTab>
          <PaletteTab>
            <svg width="13" height="12" viewBox="0 0 13 12"><path d="M1 2h5M3.500 0v4M1 6l5-4" stroke="#444" fill="none" /><circle cx="8.500" cy="8" r="3.500" fill="#fff" stroke="#333" strokeWidth="1.200" /><path d="M8.500 6v4M6.500 8h4" stroke="#333" /></svg>
          </PaletteTab>
          <PaletteTab>
            <svg width="4" height="8" viewBox="0 0 4 8"><path d="M0 2h3M0 4.500h3" stroke="#333" strokeWidth="1.200" /></svg>
            <Star size={12} fill="#2b2b2b" color="#2b2b2b" />
          </PaletteTab>
          <PaletteTab>
            <svg width="13" height="12" viewBox="0 0 13 12"><path d="M1 2v9h9" fill="none" stroke="#333" strokeWidth="1.400" /><rect x="3" y="1" width="9" height="8" fill="#fff" stroke="#333" /><path d="M4 8l3-4 4 4z" fill="#444" /></svg>
          </PaletteTab>
          <PaletteTab>
            <svg width="13" height="12" viewBox="0 0 13 12"><path d="M1 1h3v10H1zM4 1h3v10H4zM8 1h4v10H8zM8 4h4" fill="#999" stroke="#333" strokeWidth="1.200" /></svg>
          </PaletteTab>
          <PaletteTab><Wrench size={12} fill="#333" color="#333" transform="scale(-1 1)" /></PaletteTab>
          <PaletteTab>
            <svg width="12" height="11" viewBox="0 0 12 11"><path d="M0 4l6-3.500L12 4v6.500H0z" fill="#444" /><path d="M1 5.500h10M1 8h10" stroke="#eee" /></svg>
          </PaletteTab>
        </PaletteTabs>

        <SectionHead><Caret $c="#9b6b45" />Font</SectionHead>
        <SectionBody $h={70}>
          <Row $h={16}>
            <RowLabel $w={28}>Name:</RowLabel><Field $w={90} /><DropButton><Caret $c="#999" /></DropButton>
          </Row>
          <Row $h={15}>
            <RowLabel $w={28}>Size:</RowLabel><Field $w={22} /><DropButton><Caret $c="#999" /></DropButton>
            <Slider><i /></Slider>
          </Row>
          <Row $h={21}>
            <ButtonGroup $w={74} $mr={5}>
              <span><b>B</b></span><span><i>I</i></span><span><u>U</u></span><span><small><s>ABC</s></small></span>
            </ButtonGroup>
            <ButtonGroup $w={26} $mr={1}><span>A</span><span><Caret $c="#999" /></span></ButtonGroup>
            <ButtonGroup $w={28}><span><small>AV</small></span><span><Caret $c="#999" /></span></ButtonGroup>
          </Row>
          <Row $h={18}>
            <ButtonGroup $w={38} $mr={4}><span>A<sup><small>2</small></sup></span><span>A<small>2</small></span></ButtonGroup>
            <ButtonGroup $w={39} $mr={4}><span><small>Abc</small></span><span>aA</span></ButtonGroup>
            <ButtonGroup $w={38}><span>A-</span><span>A+</span></ButtonGroup>
          </Row>
        </SectionBody>

        <SectionHead><Caret $c="#9b6b45" />Document Theme</SectionHead>
        <SectionBody $h={52}>
          <Row $h={17}>
            <RowLabel $w={30}>Colors:</RowLabel>
            <Colors>{themeColors.map((c) => <Chip key={c} $c={c} />)}</Colors>
            <DropButton $dark><Caret $c="#444" /></DropButton>
          </Row>
          <Row $h={15}>
            <RowLabel $w={30}>Fonts:</RowLabel><Field $w={98} $dark>Calibri, Calibri</Field><DropButton $dark><Caret $c="#444" /></DropButton>
          </Row>
          <Row $h={19}>
            <svg width="14" height="12" viewBox="0 0 14 12"><path d="M1 3h5l1 2h6v6H1z" fill="#9cc3dd" stroke="#2c5878" /><path d="M4 1l3 2v5L4 7zM9 4l3-2v6l-3 1z" fill="#e8f1f7" stroke="#2c5878" /></svg>
            <LinkText $w={41}>Browse...</LinkText>
            <DiskIcon s={12} />
            <LinkText $ml={3}>Save Theme...</LinkText>
          </Row>
        </SectionBody>

        <SectionHead><Caret $c="#9b6b45" />Slide Background</SectionHead>
        <SectionBody $h={142} $pt={4}>
          <SwatchGrid>{swatches.map((bg) => <Swatch key={bg} $bg={bg} />)}</SwatchGrid>
          <Row $h={25}><Check />Hide Background Graphics</Row>
          <Row $h={13}>
            <svg width="13" height="12" viewBox="0 0 13 12"><rect x="4" y="4" width="8.500" height="7.500" fill="#e3ecf4" stroke="#7d93a6" /><path d="M1 6l5-4 4 5-5 4z" fill="#47647c" stroke="#23394c" /><path d="M3 1l3 4" stroke="#222" /></svg>
            <LinkText $ml={3}>Format Background...</LinkText>
          </Row>
        </SectionBody>
      </Palette>

      <MenuBar>
        <MenuItem $w={24}><FaApple size={12} /></MenuItem>
        <MenuItem $w={69} $bold $ls={-0.08}>PowerPoint</MenuItem>
        {menus.map(([name, w]) => <MenuItem key={name} $w={w}>{name}</MenuItem>)}
        <svg width="8" height="10" viewBox="0 0 8 10"><path d="M4 0L1 4h3L1 6.500h4L3 10l4-4H4.500L7 3H4z" fill="#222" stroke="#222" strokeWidth=".8" /></svg>
        <Spacer />
        <TrayItem $w={18} $color="#777"><FaBell size={8} /></TrayItem>
        <TrayItem $w={18}><FaGoogleDrive size={11} /></TrayItem>
        <TrayItem $w={18} $color="#2478b8"><FaDropbox size={12} /></TrayItem>
        <TrayItem $w={20}>
          <svg width="12" height="12" viewBox="0 0 12 12"><rect width="12" height="12" rx="3" fill="#e0401f" /><circle cx="6" cy="6" r="3.500" fill="none" stroke="#fff" strokeWidth="1.300" /><path d="M4.500 4.500h3v2.300L6 8 4.500 6.800z" fill="#fff" /></svg>
        </TrayItem>
        <TrayItem $w={22}>
          <svg width="14" height="9" viewBox="0 0 14 9"><rect x=".7" y="1" width="8.500" height="7" fill="none" stroke="#222" strokeWidth="1.300" /><path d="M10 4.500l3-2.500v5z" fill="none" stroke="#222" /></svg>
        </TrayItem>
        <TrayItem $w={14}>
          <svg width="12" height="12" viewBox="0 0 12 12"><rect width="12" height="12" rx="2" fill="#151515" /><path d="M3.500 3v4.500h3M8.500 9V4.500h-3M3 5l2-2 2 2" fill="none" stroke="#eee" strokeWidth="1.100" /></svg>
        </TrayItem>
        <TrayItem $w={22}><FaEject size={8} /></TrayItem>
        <TrayItem $w={22}>
          <svg width="11" height="11" viewBox="0 0 11 11"><circle cx="5.500" cy="5.500" r="4.500" fill="none" stroke="#888" strokeWidth="1.200" /><path d="M5.500 2.500v3.500l2 .5" fill="none" stroke="#777" /></svg>
        </TrayItem>
        <TrayItem $w={16}><Bluetooth size={10} strokeWidth={2.6} /></TrayItem>
        <TrayItem $w={26}><Wifi size={15} strokeWidth={3} /></TrayItem>
        <TrayItem $w={16}>
          <svg width="11" height="9" viewBox="0 0 11 9"><rect x=".6" y=".6" width="9.800" height="7.800" fill="none" stroke="#222" strokeWidth="1.200" /><path d="M2.500 4h2v2M6.500 3v3h2" stroke="#333" fill="none" /></svg>
        </TrayItem>
        <TrayItem $w={20}><Volume1 size={11} fill="#222" strokeWidth={2.2} /></TrayItem>
        <TrayItem $w={80}>Wed 12:56 PM</TrayItem>
        <TrayItem $w={20}><Search size={10} strokeWidth={3} /></TrayItem>
        <TrayItem $w={9} />
      </MenuBar>

      <Watermark>
        <svg width="36" height="44" viewBox="0 0 36 44">
          <path d="M18 3a17.500 17.500 0 1 0 0 35v6c7-4 17-13 17-24A17.500 17.500 0 0 0 18 3z" fill="#fff" />
          <path d="M8 12h8v9c0 4-2 6-6 7v-3c2-1 3-2 3-4H8zM20 12h8v9c0 4-2 6-6 7v-3c2-1 3-2 3-4h-5z" fill="#8f8f7c" />
        </svg>
        <WatermarkText>Google+</WatermarkText>
      </Watermark>

      <Pointer width="8" height="12" viewBox="0 0 8 12">
        <path d="M1 0v9l2-2 1.500 4L6 10.300 4.500 6.500H7.500z" fill="#000" stroke="#ddd" strokeWidth=".5" />
      </Pointer>
    </Desktop>
  );
}
